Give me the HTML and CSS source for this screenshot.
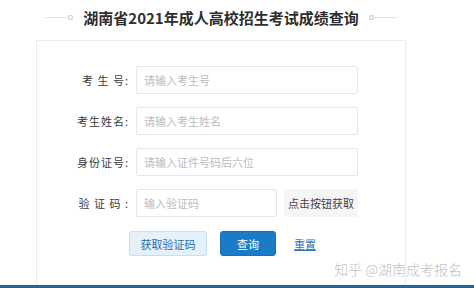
FILE: index.html
```html
<!DOCTYPE html>
<html lang="zh">
<head>
  <meta charset="utf-8">
  <title>湖南省2021年成人高校招生考试成绩查询</title>
  <link rel="stylesheet" href="styles.css">
</head>
<body>
  <div class="page">
    <h1 class="title"><span>湖南省2021年成人高校招生考试成绩查询</span></h1>

    <div class="card">
      <form class="form">
        <label class="label" for="ksh">考 生 号:</label>
        <input class="field" id="ksh" type="text" placeholder="请输入考生号">

        <label class="label" for="xm">考生姓名:</label>
        <input class="field" id="xm" type="text" placeholder="请输入考生姓名">

        <label class="label" for="zjh">身份证号:</label>
        <input class="field" id="zjh" type="text" placeholder="请输入证件号码后六位">

        <label class="label" for="yzm">验 证 码 :</label>
        <div class="captcha">
          <input class="field" id="yzm" type="text" placeholder="输入验证码">
          <div class="captcha-img">点击按钮获取</div>
        </div>

        <div class="actions">
          <button class="btn btn-light" type="button">获取验证码</button>
          <button class="btn btn-primary" type="button">查询</button>
          <a class="reset" href="#">重置</a>
        </div>
      </form>
    </div>

    <div class="bar"></div>
    <div class="watermark">知乎 @湖南成考报名</div>
  </div>
</body>
</html>
```

FILE: styles.css
```css
*, *::before, *::after {
  margin: 0;
  padding: 0;
  box-sizing: border-box;
}

body {
  background: #fff;
  font-family: "Noto Sans CJK SC", "Noto Sans", sans-serif;
  color: #333;
}

.page {
  position: relative;
  width: 474px;
  height: 288px;
  overflow: hidden;
}

.title {
  margin-left: 36px;
  width: 370px;
  height: 40px;
  display: flex;
  align-items: center;
  justify-content: center;
  gap: 10px;
  padding-bottom: 6px;
  font-size: 15px;
  font-weight: 700;
  color: #2e2e2e;
}

.title::before,
.title::after {
  content: "";
  width: 28px;
  height: 5px;
  background:
    radial-gradient(circle, #fff 1px, #d6d6d6 1.5px, #d6d6d6 2.5px, transparent 3px) no-repeat,
    linear-gradient(#e4e4e4, #e4e4e4) no-repeat;
}

.title::before {
  background-size: 5px 5px, 24px 1px;
  background-position: right center, left center;
}

.title::after {
  background-size: 5px 5px, 24px 1px;
  background-position: left center, right center;
}

.card {
  margin-left: 36px;
  width: 370px;
  height: 245px;
  border: 1px solid #ececec;
  border-bottom: none;
  padding-top: 25px;
}

.form {
  display: grid;
  grid-template-columns: 92px 222px;
  column-gap: 7px;
  row-gap: 13px;
  align-items: center;
}

.label {
  font-size: 11px;
  letter-spacing: 1px;
  text-align: right;
  color: #3a3a3a;
  white-space: pre;
}

.field {
  height: 28px;
  width: 100%;
  border: 1px solid #e6e6e6;
  border-radius: 2px;
  padding: 0 7px;
  font-family: inherit;
  font-size: 11px;
  color: #333;
  outline: none;
}

.field::placeholder {
  color: #bcbcbc;
}

.captcha {
  display: flex;
  gap: 7px;
}

.captcha .field {
  width: 141px;
}

.captcha-img {
  flex: 1;
  height: 28px;
  display: flex;
  align-items: center;
  justify-content: center;
  background: #f5f5f5;
  border-radius: 2px;
  font-size: 11px;
  color: #444;
}

.actions {
  grid-column: 1 / -1;
  display: flex;
  align-items: center;
  padding-left: 92px;
  margin-top: 1px;
  gap: 13px;
}

.btn {
  height: 25px;
  border-radius: 3px;
  font-family: inherit;
  font-size: 11px;
  cursor: pointer;
}

.btn-light {
  width: 78px;
  background: #e4f0fa;
  border: 1px solid #c9def0;
  color: #2a6ea8;
}

.btn-primary {
  width: 56px;
  background: #1a7cc6;
  border: 1px solid #1672b8;
  color: #fff;
}

.reset {
  margin-left: 5px;
  font-size: 11px;
  color: #2a72b8;
}

.bar {
  height: 3px;
  background: #1f66a3;
}

.watermark {
  position: absolute;
  right: 12px;
  top: 259px;
  font-size: 14px;
  font-weight: 300;
  color: #c2c2c2;
}
```
